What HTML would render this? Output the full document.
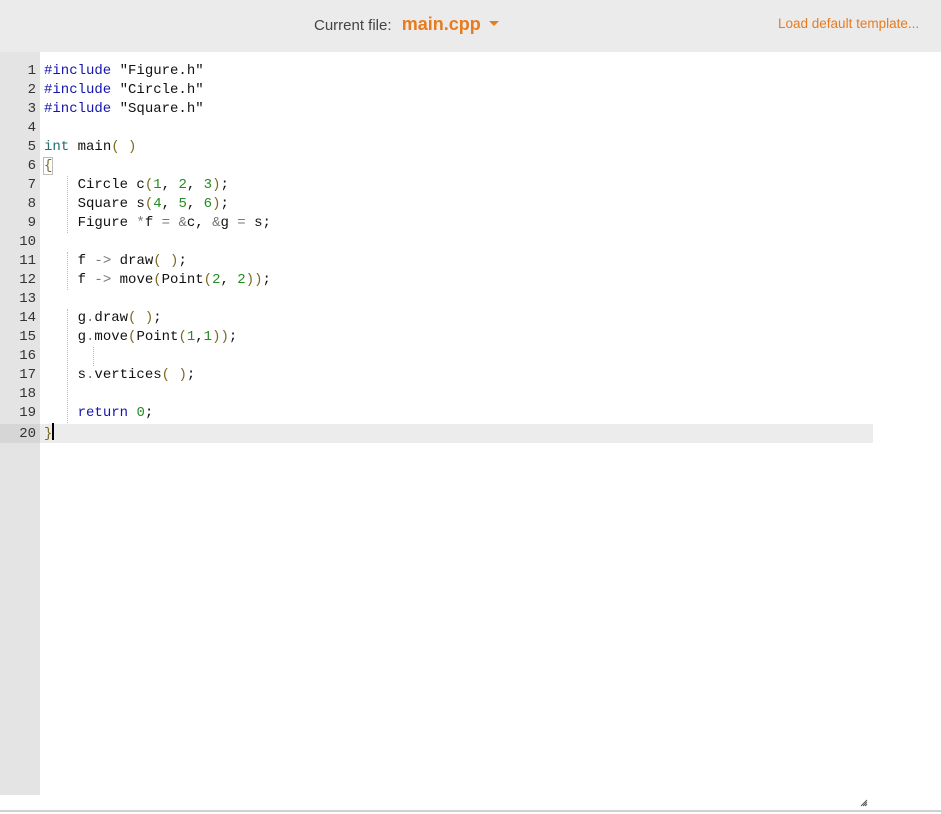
<!DOCTYPE html>
<html><head><style>
body{margin:0;width:941px;height:814px;background:#fff;position:relative;overflow:hidden;font-family:"Liberation Sans",sans-serif}
.hdr{position:absolute;left:0;top:0;width:941px;height:52px;background:#ebebeb}
.cf{position:absolute;left:314px;top:14px;font-size:15px;color:#444}
.cf b{color:#e87b1e;font-size:18px;font-weight:bold;margin-left:6px}
.tri{display:inline-block;width:0;height:0;border-left:5px solid transparent;border-right:5px solid transparent;border-top:5px solid #e87b1e;margin-left:8px;vertical-align:4px}
.ld{position:absolute;left:778px;top:16px;font-size:13.5px;color:#e87b1e}
.gut{position:absolute;left:0;top:52px;width:40px;height:743px;background:#e4e4e4}
.act{position:absolute;left:40px;top:424px;width:833px;height:19px;background:#ececec}
.ag{position:absolute;left:0;top:424px;width:40px;height:19px;background:#d6d6d6}
.code{position:absolute;left:0;top:62px;font-family:"Liberation Mono",monospace;font-size:14px;line-height:19px;white-space:pre;color:#111}
.ln{display:inline-block;width:36px;text-align:right;color:#333;margin-right:8px}
.k{color:#1515b0}.t{color:#207070}.p{color:#7a6a20}.n{color:#228b22}.o{color:#777}
.ig{border-left:1px dotted #bbb}
.bot{position:absolute;left:0;top:810px;width:941px;height:2px;background:#d0d0d0}
.cur{display:inline-block;width:2px;height:17px;background:#000;vertical-align:-3px}
</style></head><body>
<div class="hdr"><div class="cf">Current file: <b>main.cpp</b><span class="tri"></span></div><div class="ld">Load default template...</div></div>
<div class="gut"></div><div class="act"></div><div class="ag"></div>
<div class="code"><span class="ln">1</span><span class="k">#include</span> "Figure.h"
<span class="ln">2</span><span class="k">#include</span> "Circle.h"
<span class="ln">3</span><span class="k">#include</span> "Square.h"
<span class="ln">4</span>
<span class="ln">5</span><span class="t">int</span> main<span class="p">( )</span>
<span class="ln">6</span><span class="p" style="outline:1px solid #bbb">{</span>
<span class="ln">7</span>    Circle c<span class="p">(</span><span class="n">1</span>, <span class="n">2</span>, <span class="n">3</span><span class="p">)</span>;
<span class="ln">8</span>    Square s<span class="p">(</span><span class="n">4</span>, <span class="n">5</span>, <span class="n">6</span><span class="p">)</span>;
<span class="ln">9</span>    Figure <span class="o">*</span>f <span class="o">=</span> <span class="o">&amp;</span>c, <span class="o">&amp;</span>g <span class="o">=</span> s;
<span class="ln">10</span>
<span class="ln">11</span>    f <span class="o">-&gt;</span> draw<span class="p">( )</span>;
<span class="ln">12</span>    f <span class="o">-&gt;</span> move<span class="p">(</span>Point<span class="p">(</span><span class="n">2</span>, <span class="n">2</span><span class="p">))</span>;
<span class="ln">13</span>
<span class="ln">14</span>    g<span class="o">.</span>draw<span class="p">( )</span>;
<span class="ln">15</span>    g<span class="o">.</span>move<span class="p">(</span>Point<span class="p">(</span><span class="n">1</span>,<span class="n">1</span><span class="p">))</span>;
<span class="ln">16</span>
<span class="ln">17</span>    s<span class="o">.</span>vertices<span class="p">( )</span>;
<span class="ln">18</span>
<span class="ln">19</span>    <span class="k">return</span> <span class="n">0</span>;
<span class="ln">20</span><span class="p">}</span><span class="cur"></span></div>
<div style="position:absolute;left:67px;top:176px;height:57px;border-left:1px dotted #bbb"></div>
<div style="position:absolute;left:67px;top:252px;height:38px;border-left:1px dotted #bbb"></div>
<div style="position:absolute;left:67px;top:309px;height:114px;border-left:1px dotted #bbb"></div>
<div style="position:absolute;left:93px;top:347px;height:19px;border-left:1px dotted #bbb"></div>
<svg style="position:absolute;left:860px;top:799px" width="8" height="8"><path d="M1 7L7 1M3 7L7 3M5 7L7 5" stroke="#555" stroke-width="1"/></svg>
<div class="bot"></div>
</body></html>
